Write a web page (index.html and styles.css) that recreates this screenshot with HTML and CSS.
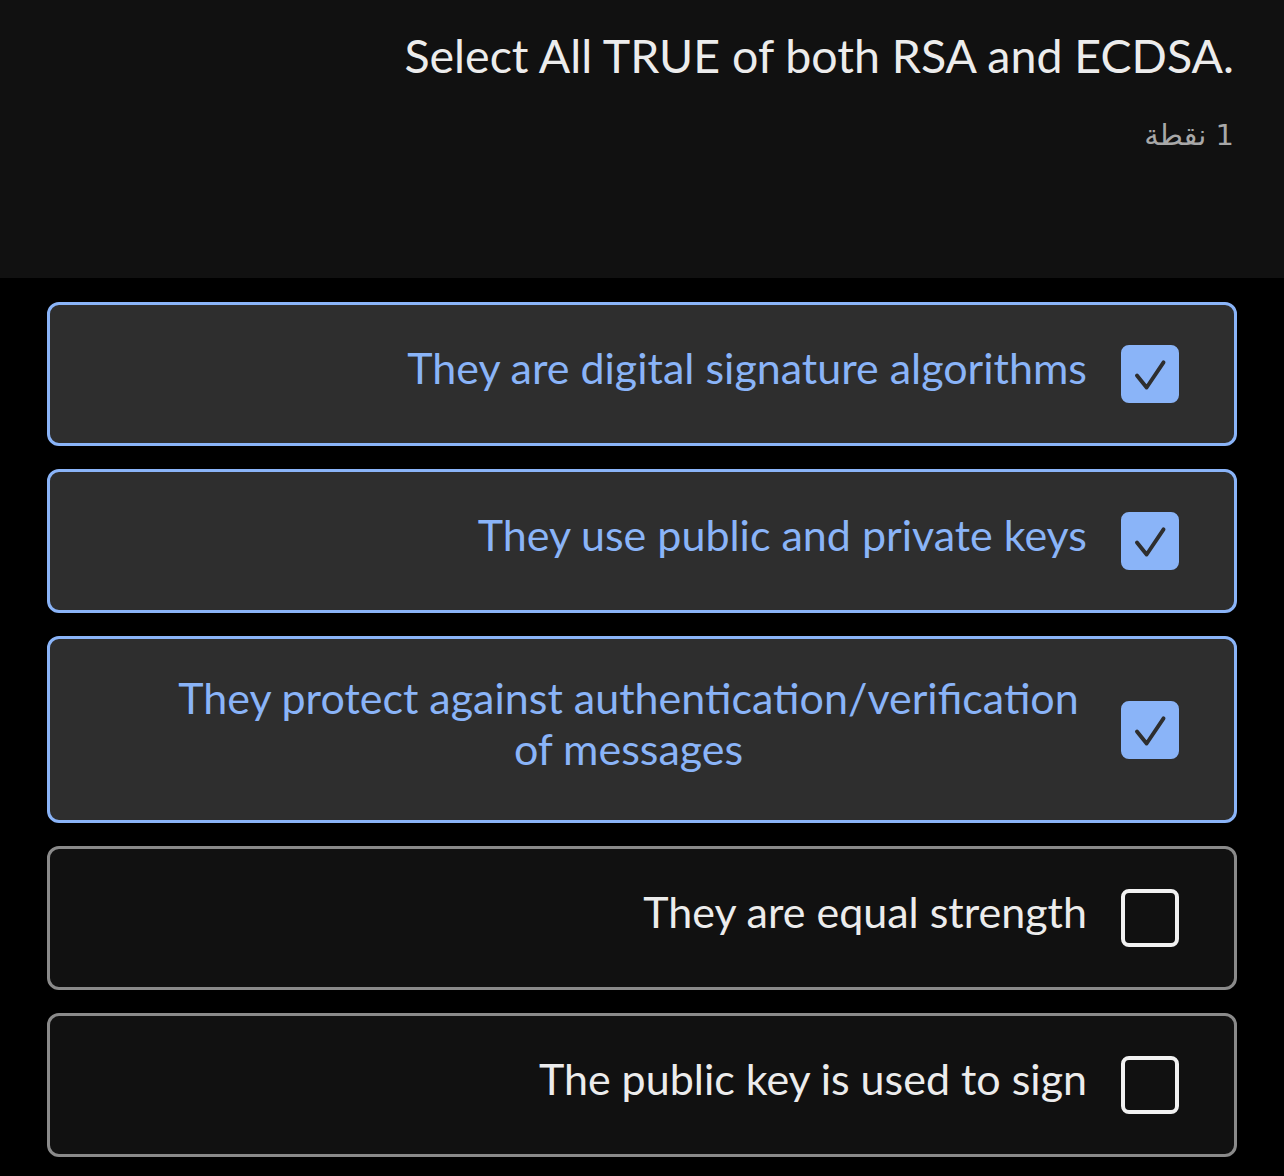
FILE: index.html
```html
<!DOCTYPE html>
<html lang="ar" dir="rtl">
<head>
<meta charset="utf-8">
<title>Quiz</title>
<link rel="stylesheet" href="styles.css">
</head>
<body>
<header class="question">
  <h1 class="question-title" dir="ltr">Select All TRUE of both RSA and ECDSA.</h1>
  <div class="question-points">1 نقطة</div>
</header>
<main class="options">
  <label class="option checked">
    <span class="box"><svg viewBox="0 0 24 24"><path d="M6.6 12.6 L10.6 17.6 L17.6 7.2" /></svg></span>
    <span class="text" dir="ltr">They are digital signature algorithms</span>
  </label>
  <label class="option checked">
    <span class="box"><svg viewBox="0 0 24 24"><path d="M6.6 12.6 L10.6 17.6 L17.6 7.2" /></svg></span>
    <span class="text" dir="ltr">They use public and private keys</span>
  </label>
  <label class="option checked">
    <span class="box"><svg viewBox="0 0 24 24"><path d="M6.6 12.6 L10.6 17.6 L17.6 7.2" /></svg></span>
    <span class="text" dir="ltr">They protect against authentication/verification of messages</span>
  </label>
  <label class="option">
    <span class="box"></span>
    <span class="text" dir="ltr">They are equal strength</span>
  </label>
  <label class="option">
    <span class="box"></span>
    <span class="text" dir="ltr">The public key is used to sign</span>
  </label>
</main>
</body>
</html>
```
FILE: styles.css
```css
html, body {
  margin: 0;
  padding: 0;
  background: #000;
  font-family: Lato, "DejaVu Sans", sans-serif;
}

.question {
  background: #111111;
  height: 278px;
  box-sizing: border-box;
  padding: 25px 50px 0 50px;
}

.question-title {
  margin: 0;
  font-weight: 400;
  font-size: 46.5px;
  line-height: 60px;
  color: #ececec;
  text-align: right;
}

.question-points {
  margin-top: 32px;
  font-size: 29px;
  line-height: 36px;
  color: #a8a8a8;
  font-family: "DejaVu Sans", sans-serif;
}

.options {
  display: flex;
  flex-direction: column;
  gap: 23px;
  padding: 24px 47px 0 47px;
}

.option {
  display: flex;
  align-items: center;
  gap: 34px;
  min-height: 144px;
  box-sizing: border-box;
  padding: 40px 55px 40px 120px;
  border: 3px solid #8a8a8a;
  border-radius: 12px;
  background: #111111;
}

.option.checked {
  border-color: #8ab4f8;
  background: #2e2e2e;
}

.box {
  flex: 0 0 auto;
  width: 58px;
  height: 58px;
  box-sizing: border-box;
  border: 4px solid #f2f2f2;
  border-radius: 8px;
  display: flex;
  align-items: center;
  justify-content: center;
}

.option.checked .box {
  background: #8ab4f8;
  border-color: #8ab4f8;
}

.box svg {
  width: 58px;
  height: 58px;
  flex: 0 0 auto;
}

.box path {
  fill: none;
  stroke: #2e2e2e;
  stroke-width: 1.6;
  stroke-linecap: round;
  stroke-linejoin: round;
}

.text {
  font-size: 43px;
  line-height: 50.5px;
  margin-top: -6px;
  margin-bottom: 6px;
  color: #ececec;
  text-align: center;
}

.option.checked .text {
  color: #8ab4f8;
}
```
